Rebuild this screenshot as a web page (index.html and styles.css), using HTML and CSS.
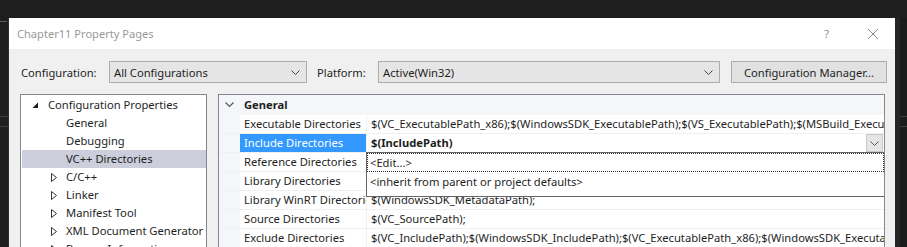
FILE: index.html
```html
<!DOCTYPE html>
<html lang="en">
<head>
    <meta charset="UTF-8">
    <title>Chapter11 Property Pages</title>
    <link rel="stylesheet" href="styles.css">
</head>
<body>
    <div class="top-strip"><span class="dash"></span></div>
    <div class="main">
        <div class="edge edge-left"><span class="line"></span><span class="line"></span></div>

        <div class="dialog">
            <!-- Title bar -->
            <div class="titlebar">
                <span class="title">Chapter11 Property Pages</span>
                <span class="help">?</span>
                <svg class="close" width="12" height="12" viewBox="0 0 12 12">
                    <path d="M1 1 L11 11 M11 1 L1 11" stroke="#8a8a8a" stroke-width="1" fill="none"/>
                </svg>
            </div>

            <!-- Configuration / platform row -->
            <div class="toolbar">
                <span class="label">Configuration:</span>
                <div class="combo combo-config">
                    <span>All Configurations</span>
                    <svg width="9" height="5" viewBox="0 0 9 5"><path d="M0.5 0.5 L4.5 4.5 L8.5 0.5" stroke="#444" fill="none"/></svg>
                </div>
                <span class="label label-platform">Platform:</span>
                <div class="combo combo-platform">
                    <span>Active(Win32)</span>
                    <svg width="9" height="5" viewBox="0 0 9 5"><path d="M0.5 0.5 L4.5 4.5 L8.5 0.5" stroke="#444" fill="none"/></svg>
                </div>
                <button class="btn">Configuration Manager...</button>
            </div>

            <div class="panes">
                <!-- Tree -->
                <ul class="tree">
                    <li class="root">
                        <svg class="tri" width="7" height="7" viewBox="0 0 7 7"><path d="M6 0.5 L6 6 L0.5 6 Z" fill="#1e1e1e"/></svg>
                        Configuration Properties
                    </li>
                    <li class="leaf">General</li>
                    <li class="leaf">Debugging</li>
                    <li class="leaf selected">VC++ Directories</li>
                    <li class="branch"><svg class="tri" width="6" height="9" viewBox="0 0 6 9"><path d="M0.5 0.5 L5.5 4.5 L0.5 8.5 Z" fill="none" stroke="#333"/></svg>C/C++</li>
                    <li class="branch"><svg class="tri" width="6" height="9" viewBox="0 0 6 9"><path d="M0.5 0.5 L5.5 4.5 L0.5 8.5 Z" fill="none" stroke="#333"/></svg>Linker</li>
                    <li class="branch"><svg class="tri" width="6" height="9" viewBox="0 0 6 9"><path d="M0.5 0.5 L5.5 4.5 L0.5 8.5 Z" fill="none" stroke="#333"/></svg>Manifest Tool</li>
                    <li class="branch"><svg class="tri" width="6" height="9" viewBox="0 0 6 9"><path d="M0.5 0.5 L5.5 4.5 L0.5 8.5 Z" fill="none" stroke="#333"/></svg>XML Document Generator</li>
                    <li class="branch"><svg class="tri" width="6" height="9" viewBox="0 0 6 9"><path d="M0.5 0.5 L5.5 4.5 L0.5 8.5 Z" fill="none" stroke="#333"/></svg>Browse Information</li>
                </ul>

                <!-- Property grid -->
                <div class="grid">
                    <div class="row category">
                        <div class="gutter">
                            <svg width="9" height="6" viewBox="0 0 9 6"><path d="M0.5 0.5 L4.5 4.5 L8.5 0.5" stroke="#555" stroke-width="1.2" fill="none"/></svg>
                        </div>
                        <div class="cat-name">General</div>
                    </div>
                    <div class="row">
                        <div class="gutter"></div>
                        <div class="name">Executable Directories</div>
                        <div class="value">$(VC_ExecutablePath_x86);$(WindowsSDK_ExecutablePath);$(VS_ExecutablePath);$(MSBuild_ExecutablePath);$(SystemRoot)\SysWow64;$(FxCopDir);$(PATH);</div>
                    </div>
                    <div class="row">
                        <div class="gutter"></div>
                        <div class="name active">Include Directories</div>
                        <div class="value editing">
                            <span class="bold">$(IncludePath)</span>
                            <span class="drop-btn">
                                <svg width="9" height="5" viewBox="0 0 9 5"><path d="M0.5 0.5 L4.5 4.5 L8.5 0.5" stroke="#555" fill="none"/></svg>
                            </span>
                        </div>
                    </div>
                    <div class="row">
                        <div class="gutter"></div>
                        <div class="name">Reference Directories</div>
                        <div class="value">$(VC_ReferencesPath_x86);</div>
                    </div>
                    <div class="row">
                        <div class="gutter"></div>
                        <div class="name">Library Directories</div>
                        <div class="value">$(VC_LibraryPath_x86);$(WindowsSDK_LibraryPath_x86);$(NETFXKitsDir)Lib\um\x86</div>
                    </div>
                    <div class="row">
                        <div class="gutter"></div>
                        <div class="name">Library WinRT Directories</div>
                        <div class="value">$(WindowsSDK_MetadataPath);</div>
                    </div>
                    <div class="row">
                        <div class="gutter"></div>
                        <div class="name">Source Directories</div>
                        <div class="value">$(VC_SourcePath);</div>
                    </div>
                    <div class="row">
                        <div class="gutter"></div>
                        <div class="name">Exclude Directories</div>
                        <div class="value">$(VC_IncludePath);$(WindowsSDK_IncludePath);$(VC_ExecutablePath_x86);$(WindowsSDK_ExecutablePath);$(MSBuild_ExecutablePath);</div>
                    </div>

                    <!-- Open dropdown of Include Directories -->
                    <ul class="dropdown">
                        <li class="focused">&lt;Edit...&gt;</li>
                        <li>&lt;inherit from parent or project defaults&gt;</li>
                    </ul>
                </div>
            </div>
        </div>

        <div class="edge edge-right"><span class="line"></span><span class="line"></span></div>
    </div>
</body>
</html>
```

FILE: styles.css
```css
body {
    margin: 0;
    width: 907px;
    height: 247px;
    overflow: hidden;
    background-color: #1e1e1e;
    font-family: "Noto Sans", "Open Sans", sans-serif;
    font-size: 11.2px;
    color: #1e1e1e;
}
.top-strip {
    height: 18px;
    position: relative;
}
.top-strip .dash {
    position: absolute;
    left: 0;
    top: 21px;
    width: 7px;
    height: 1px;
    background-color: #5a5a5a;
}
.main {
    display: flex;
    height: 229px;
}
.edge {
    display: flex;
    flex-direction: column;
    padding-top: 98px;
}
.edge .line {
    height: 1px;
    background-color: #3f3f46;
    margin-bottom: 9px;
}
.edge-left {
    width: 8px;
    border-right: 1px solid #2d2d30;
}
.edge-right {
    flex: 1;
    background-color: #1b1b1c;
    border-left: 5px solid #252526;
}

/* Dialog */
.dialog {
    width: 886px;
    background-color: #f0f0f0;
    display: flex;
    flex-direction: column;
    overflow: hidden;
}
.titlebar {
    flex-shrink: 0;
    height: 31px;
    background-color: #ffffff;
    display: flex;
    align-items: center;
    padding-left: 8px;
}
.title {
    flex: 1;
    color: #999999;
    font-size: 11.1px;
    padding-bottom: 1px;
}
.help {
    color: #8a8a8a;
    font-size: 11px;
    margin-right: 38px;
}
.close {
    margin-right: 16px;
}

.toolbar {
    flex-shrink: 0;
    display: flex;
    align-items: center;
    padding: 12px 0 0 12px;
    height: 22px;
}
.label {
    width: 88px;
}
.label-platform {
    width: 61px;
    margin-left: 10px;
}
.combo {
    height: 20px;
    border: 1px solid #acacac;
    background-color: #e5e5e5;
    display: flex;
    align-items: center;
    justify-content: space-between;
    padding: 0 6px 0 4px;
}
.combo-config {
    width: 186px;
}
.combo-platform {
    width: 330px;
}
.btn {
    margin-left: 11px;
    width: 156px;
    height: 22px;
    border: 1px solid #adadad;
    background-color: #e1e1e1;
    font-family: inherit;
    font-size: 11.2px;
    color: #1e1e1e;
    padding: 0;
}

.panes {
    display: flex;
    margin: 11px 10px 0 11px;
    gap: 11px;
    flex: 1;
    min-height: 0;
}

/* Tree */
.tree {
    list-style: none;
    margin: 0;
    padding: 1px 0 0 1px;
    width: 184px;
    background-color: #ffffff;
    border: 1px solid #828790;
    border-bottom: none;
    overflow: hidden;
}
.tree li {
    height: 18px;
    line-height: 18px;
    white-space: nowrap;
    display: flex;
    align-items: center;
}
.tree .root {
    padding-left: 10px;
}
.tree .root .tri {
    margin-right: 9px;
}
.tree .leaf {
    padding-left: 44px;
}
.tree .branch {
    padding-left: 29px;
}
.tree .branch .tri {
    margin-right: 9px;
}
.tree .selected {
    background-color: #cccedb;
}

/* Property grid */
.grid {
    flex: 1;
    background-color: #ffffff;
    border: 1px solid #828790;
    border-bottom: none;
    position: relative;
    overflow: hidden;
}
.row {
    display: flex;
    height: 18px;
    border-bottom: 1px solid #f0f0f0;
    line-height: 18px;
}
.row.category {
    height: 20px;
    line-height: 20px;
    background-color: #f4f6fa;
    border-bottom: none;
}
.gutter {
    width: 21px;
    flex-shrink: 0;
    background-color: #f4f6fa;
    display: flex;
    align-items: center;
    justify-content: center;
}
.cat-name {
    font-weight: bold;
    padding-left: 4px;
}
.name {
    width: 122px;
    flex-shrink: 0;
    padding-left: 4px;
    overflow: hidden;
    white-space: nowrap;
    border-right: 1px solid #f0f0f0;
}
.name.active {
    background-color: #3399ff;
    color: #ffffff;
}
.value {
    flex: 1;
    padding-left: 4px;
    white-space: nowrap;
    overflow: hidden;
}
.value.editing {
    display: flex;
    align-items: center;
    justify-content: space-between;
    padding-right: 1px;
}
.bold {
    font-weight: bold;
}
.drop-btn {
    width: 15px;
    height: 16px;
    border: 1px solid #c8c8c8;
    background-color: #e5e5e5;
    display: flex;
    align-items: center;
    justify-content: center;
}

.dropdown {
    position: absolute;
    left: 147px;
    top: 57px;
    width: 517px;
    height: 43px;
    margin: 0;
    padding: 0;
    list-style: none;
    background-color: #ffffff;
    border: 1px solid #646464;
}
.dropdown li {
    height: 19px;
    line-height: 19px;
    padding-left: 3px;
    box-sizing: border-box;
}
.dropdown li.focused {
    border: 1px dotted #333;
    line-height: 17px;
    padding-left: 2px;
}
```
